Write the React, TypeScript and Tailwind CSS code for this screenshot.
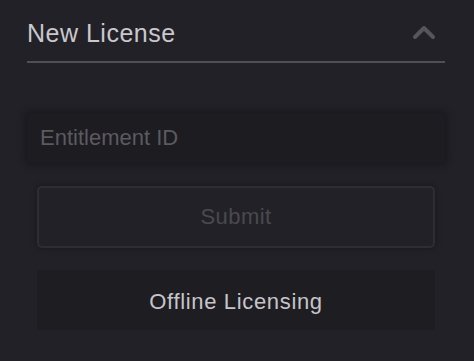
import React from "react";

export default function App() {
  return (
    <div
      className="w-[474px] h-[361px] bg-[#222127] overflow-hidden"
      style={{ fontFamily: '"Liberation Sans", Arial, sans-serif' }}
    >
      <div className="mx-[27px] w-[418px]">
        <div className="flex items-start justify-between pt-[20px] pb-[15px] border-b-2 border-[#504f55]">
          <span className="text-[25px] leading-[26px] tracking-[0.5px] text-[#c9c8cc]">
            New License
          </span>
          <svg width="24" height="16" viewBox="0 0 24 16" className="mt-[4px] mr-[9px]">
            <polyline
              points="3,13 12,4 21,13"
              fill="none"
              stroke="#56555b"
              strokeWidth="4"
              strokeLinecap="round"
              strokeLinejoin="round"
            />
          </svg>
        </div>

        <div className="mt-[50px] h-[50px] bg-[#1d1c21] rounded-[3px] shadow-[0_0_6px_2px_rgba(20,19,24,0.6)] flex items-center pl-[13px]">
          <span className="text-[22px] leading-[22px] text-[#5b5a60]">Entitlement ID</span>
        </div>

        <div className="mx-[10px] mt-[23px] h-[62px] rounded-[5px] border-2 border-[#2e2d33] shadow-[0_0_4px_1px_rgba(20,19,24,0.5)] flex items-center justify-center">
          <span className="text-[22px] leading-[22px] tracking-[0.02em] text-[#4a494f]">Submit</span>
        </div>

        <div className="mx-[10px] mt-[22px] h-[60px] bg-[#1e1d22] rounded-[2px] flex items-center justify-center pt-[3px]">
          <span className="text-[22px] leading-[22px] tracking-[0.03em] text-[#c6c5c9]">
            Offline Licensing
          </span>
        </div>
      </div>
    </div>
  );
}
